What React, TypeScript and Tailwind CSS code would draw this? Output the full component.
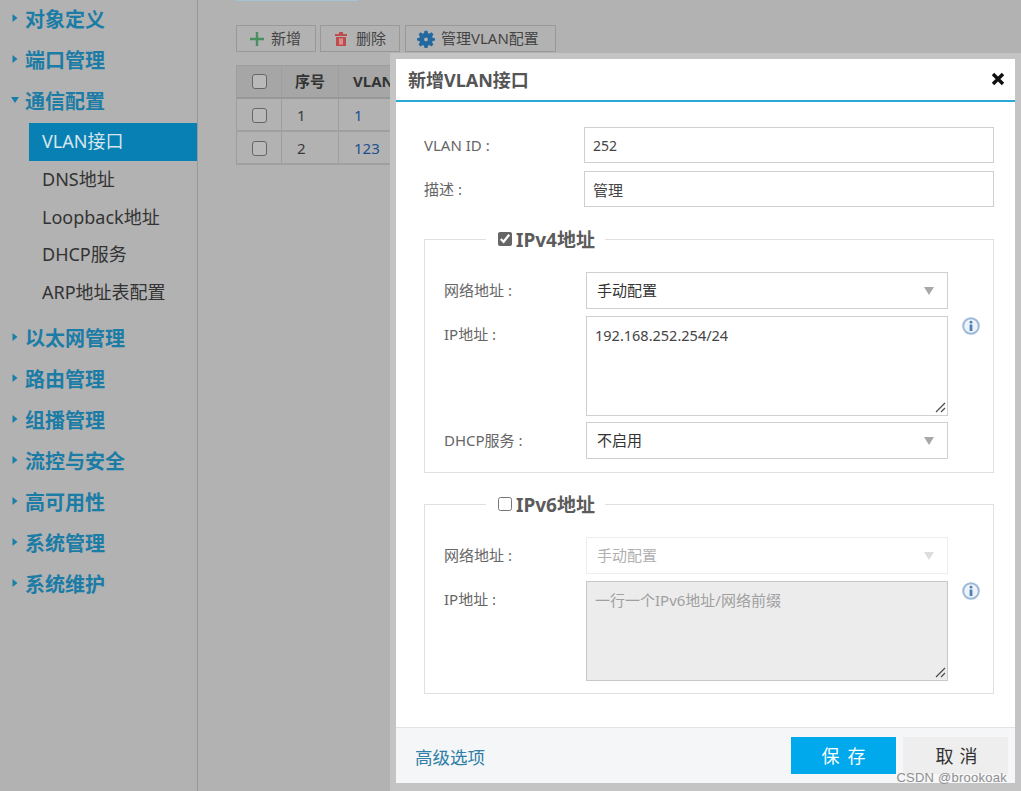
import React from 'react';

const font = 'font-["Noto_Sans","Noto_Sans_CJK_SC",sans-serif]';

const groupsTop = ['对象定义', '端口管理'];
const groupsBottom = ['以太网管理', '路由管理', '组播管理', '流控与安全', '高可用性', '系统管理', '系统维护'];
const subItems = ['DNS地址', 'Loopback地址', 'DHCP服务', 'ARP地址表配置'];

const NavHead: React.FC<{ label: string; open?: boolean }> = ({ label, open }) => (
  <div className="flex h-[41px] items-center pl-[11px]">
    <svg width="8" height="10" viewBox="0 0 8 10" className="mr-[6px] mt-[-4px] shrink-0">
      {open ? <path d="M0 2 L8 2 L4 8 Z" fill="#1a7fa8" /> : <path d="M1.500 1 L6.500 5 L1.500 9 Z" fill="#1a7fa8" />}
    </svg>
    <span className="text-[20px] font-bold text-[#1b7ca6]">{label}</span>
  </div>
);

const TableCheck: React.FC = () => (
  <span className="block h-[15px] w-[15px] rounded-[3px] border border-[#666666] bg-[#b9b9b9]" />
);

const ToolButton: React.FC<{ className: string; icon: React.ReactNode; label: string }> = ({ className, icon, label }) => (
  <div className={`flex h-[27px] items-center border border-[#989898] bg-[#b2b2b2] text-[15px] text-[#444444] ${className}`}>
    {icon}
    <span>{label}</span>
  </div>
);

const Row: React.FC<{ index: string; vlan: string }> = ({ index, vlan }) => (
  <div className="flex h-[33px] items-center border-b-2 border-[#a0a0a0] text-[15px]">
    <div className="flex h-full w-[45px] items-center justify-center border-r border-[#9e9e9e] pt-[2px]"><TableCheck /></div>
    <div className="flex h-full w-[57px] items-center border-r border-[#9e9e9e] pl-[15px] pt-[2px] text-[#3a3a3a]">{index}</div>
    <div className="pl-[15px] pt-[2px] text-[#1d4f8f]">{vlan}</div>
  </div>
);

const Info: React.FC = () => (
  <svg width="18" height="18" viewBox="0 0 18 18" className="ml-[14px] mt-[1px] shrink-0">
    <circle cx="9" cy="9" r="7.800" fill="#eef3fa" stroke="#9db8d8" strokeWidth="2" />
    <circle cx="9" cy="5.200" r="1.400" fill="#4f7fb5" />
    <rect x="7.600" y="7.500" width="2.800" height="6.500" fill="#4f7fb5" />
  </svg>
);

const Select: React.FC<{ value: string; disabled?: boolean }> = ({ value, disabled }) => (
  <div className={`flex h-[37px] w-[362px] items-center justify-between border pl-[10px] pr-[13px] text-[15px] ${disabled ? 'border-[#eeeeee] text-[#b0b0b0]' : 'border-[#cfcfcf] text-[#333333]'}`}>
    <span>{value}</span>
    <svg width="10" height="9" viewBox="0 0 10 9"><path d="M0 1 L10 1 L5 9 Z" fill={disabled ? '#dddddd' : '#a8a8a8'} /></svg>
  </div>
);

const FieldLabel: React.FC<{ text: string; top?: boolean }> = ({ text, top }) => (
  <div className={`w-[142px] shrink-0 text-[15px] text-[#666666] ${top ? 'pt-[7px]' : ''}`}>{text} :</div>
);

// 多行输入框，右下角的拖动手柄单独画
const TextBox: React.FC<{ value?: string; placeholder?: string; disabled?: boolean }> = ({ value, placeholder, disabled }) => (
  <div className="relative h-[100px] w-[362px]">
    {disabled ? (
      <textarea disabled placeholder={placeholder} className="block h-full w-full resize-none border border-[#c8c8c8] bg-[#ececec] px-[8px] py-[8px] text-[15px] leading-[20px] placeholder:text-[#a0a0a0]" />
    ) : (
      <textarea readOnly value={value} className="block h-full w-full resize-none border border-[#cfcfcf] px-[8px] py-[8px] text-[14.500px] leading-[20px] text-[#444444]" />
    )}
    <svg width="11" height="11" viewBox="0 0 11 11" className="absolute bottom-[3px] right-[2px]">
      <path d="M1 10 L10 1 M6 10 L10 6" stroke="#4a4a4a" strokeWidth="1.200" fill="none" />
    </svg>
  </div>
);

const Section: React.FC<{ title: string; checked: boolean; className: string; children: React.ReactNode }> = ({ title, checked, className, children }) => (
  <div className={`relative ml-[28px] mr-[21px] border border-[#e0e0e0] pl-[19px] ${className}`}>
    <div className="absolute left-[61px] top-[-13px] flex h-[24px] w-[119px] items-center bg-white pl-[12px]">
      <input type="checkbox" checked={checked} readOnly className="mr-[4px] h-[14px] w-[14px] accent-[#666666]" />
      <span className="mt-[3px] text-[19px] font-bold leading-none text-[#5c5c5c]">{title}</span>
    </div>
    {children}
  </div>
);

export default function App() {
  return (
    <div className={`relative flex h-[791px] w-[1021px] overflow-hidden bg-[#b2b2b2] ${font}`}>
      {/* 左侧菜单 */}
      <aside className="h-full w-[198px] shrink-0 border-r border-[#989898]">
        <div className="mt-[-1px]">
          {groupsTop.map((g) => <NavHead key={g} label={g} />)}
          <NavHead label="通信配置" open />
          <div className="mt-[1px]">
            <div className="ml-[29px] flex h-[38px] items-center bg-[#0880b3] pb-[1px] pl-[13px] text-[18px] text-[#d6e6ee]">VLAN接口</div>
            {subItems.map((s) => (
              <div key={s} className="flex h-[37.500px] items-center pl-[42px] text-[18px] text-[#333333]">{s}</div>
            ))}
          </div>
          <div className="mt-[7px]">
            {groupsBottom.map((g) => <NavHead key={g} label={g} />)}
          </div>
        </div>
      </aside>

      {/* 主内容 */}
      <main className="min-w-0 flex-1 pl-[38px]">
        <div className="h-px w-[122px] bg-[#a3c4d2]" />
        <div className="mt-[24px] flex">
          <ToolButton
            className="w-[80px] pl-[12px]"
            label="新增"
            icon={<svg width="16" height="16" viewBox="0 0 16 16" className="mr-[6px]"><path d="M8 1 V15 M1 8 H15" stroke="#4a8f60" strokeWidth="2.400" /></svg>}
          />
          <ToolButton
            className="ml-[4px] w-[80px] pl-[13px]"
            label="删除"
            icon={<svg width="14" height="16" viewBox="0 0 14 16" className="mr-[8px]"><path d="M5 1 H9 V3 H13 V5 H1 V3 H5 Z M2 6 H12 V15 H2 Z" fill="#bd4c4c" /><rect x="5" y="7.500" width="4" height="6" fill="#d98f8f" /></svg>}
          />
          <ToolButton
            className="ml-[5px] w-[151px] pl-[11px]"
            label="管理VLAN配置"
            icon={<svg width="18" height="18" viewBox="0 0 24 24" className="mr-[6px]"><path fillRule="evenodd" d="M10 1h4l.6 3.100 1.900.8L19.200 3 22 5.800l-1.900 2.700.8 1.900L24 11v3l-3.100.6-.8 1.900L22 19.200 19.200 22l-2.700-1.900-1.900.8L14 24h-4l-.6-3.100-1.900-.8L4.800 22 2 19.200l1.900-2.700-.8-1.900L0 14v-3l3.100-.6.8-1.900L2 5.800 4.800 3l2.700 1.900 1.900-.8zM12 10a2.500 2.500 0 1 0 0 5 2.500 2.500 0 0 0 0-5z" fill="#2369a0" /></svg>}
          />
        </div>
        <div className="mt-[13px] w-[760px] border-x border-[#9e9e9e]">
          <div className="flex h-[34px] items-center border-t border-b-2 border-[#9e9e9e] border-b-[#989898] bg-[#a6a6a6] text-[15px] font-bold text-[#333333]">
            <div className="flex h-full w-[45px] items-center justify-center border-r border-[#9e9e9e]"><TableCheck /></div>
            <div className="flex h-full w-[57px] items-center justify-center border-r border-[#9e9e9e]">序号</div>
            <div className="pl-[14px]">VLAN</div>
          </div>
          <Row index="1" vlan="1" />
          <Row index="2" vlan="123" />
        </div>
      </main>

      {/* 弹窗 */}
      <div className="absolute left-[390px] top-[53px] h-[738px] w-[631px] bg-[#c4c4c4] pb-[8px] pl-[6px] pr-[6px] pt-[6px]">
        <div className="flex h-full flex-col bg-white">
          <div className="flex h-[43px] shrink-0 items-center justify-between border-b-2 border-[#29a9d6] pl-[12px] pr-[10px] pt-[2px]">
            <span className="text-[18px] font-bold text-[#555555]">新增VLAN接口</span>
            <svg width="14" height="14" viewBox="0 0 14 14" className="mb-[4px]"><path d="M2 2 L12 12 M12 2 L2 12" stroke="#111111" strokeWidth="3.400" /></svg>
          </div>

          <div className="flex-1">
            <div className="ml-[28px] mt-[25px] flex items-center">
              <div className="w-[160px] text-[15px] text-[#666666]">VLAN ID :</div>
              <input readOnly value="252" className="h-[36px] w-[410px] border border-[#cfcfcf] pl-[8px] text-[14px] text-[#444444]" />
            </div>
            <div className="ml-[28px] mt-[8px] flex items-center">
              <div className="w-[160px] text-[15px] text-[#666666]">描述 :</div>
              <input readOnly value="管理" className="h-[36px] w-[410px] border border-[#cfcfcf] pl-[8px] text-[15px] text-[#444444]" />
            </div>

            <Section title="IPv4地址" checked className="mt-[32px] h-[234px] pt-[32px]">
              <div className="flex items-center">
                <FieldLabel text="网络地址" />
                <Select value="手动配置" />
              </div>
              <div className="mt-[7px] flex items-start">
                <FieldLabel text="IP地址" top />
                <TextBox value="192.168.252.254/24" />
                <Info />
              </div>
              <div className="mt-[6px] flex items-center">
                <FieldLabel text="DHCP服务" />
                <Select value="不启用" />
              </div>
            </Section>

            <Section title="IPv6地址" checked={false} className="mt-[31px] h-[190px] pt-[32px]">
              <div className="flex items-center">
                <FieldLabel text="网络地址" />
                <Select value="手动配置" disabled />
              </div>
              <div className="mt-[7px] flex items-start">
                <FieldLabel text="IP地址" top />
                <TextBox placeholder="一行一个IPv6地址/网络前缀" disabled />
                <Info />
              </div>
            </Section>
          </div>

          <div className="flex h-[56px] shrink-0 items-start justify-between border-t border-[#e3e3e3] bg-[#f5f6f7] pl-[19px] pr-[7px] pt-[9px]">
            <span className="mt-[8px] text-[17.500px] leading-[24px] text-[#2f7fa8]">高级选项</span>
            <div className="flex gap-[7px]">
              <div className="flex h-[37px] w-[105px] items-center justify-center bg-[#00a8ec] pl-[8px] pt-[2px] text-[18px] tracking-[8px] text-white">保存</div>
              <div className="flex h-[37px] w-[105px] items-center justify-center bg-[#eeeeee] pl-[8px] pt-[2px] text-[18px] tracking-[6px] text-[#333333]">取消</div>
            </div>
          </div>
        </div>
      </div>

      {/* 水印 */}
      <div className='absolute right-[14px] top-[768px] font-["Liberation_Sans",sans-serif] text-[13px] tracking-[0.25px] text-[#8f8f8f]'>CSDN @brookoak</div>
    </div>
  );
}
